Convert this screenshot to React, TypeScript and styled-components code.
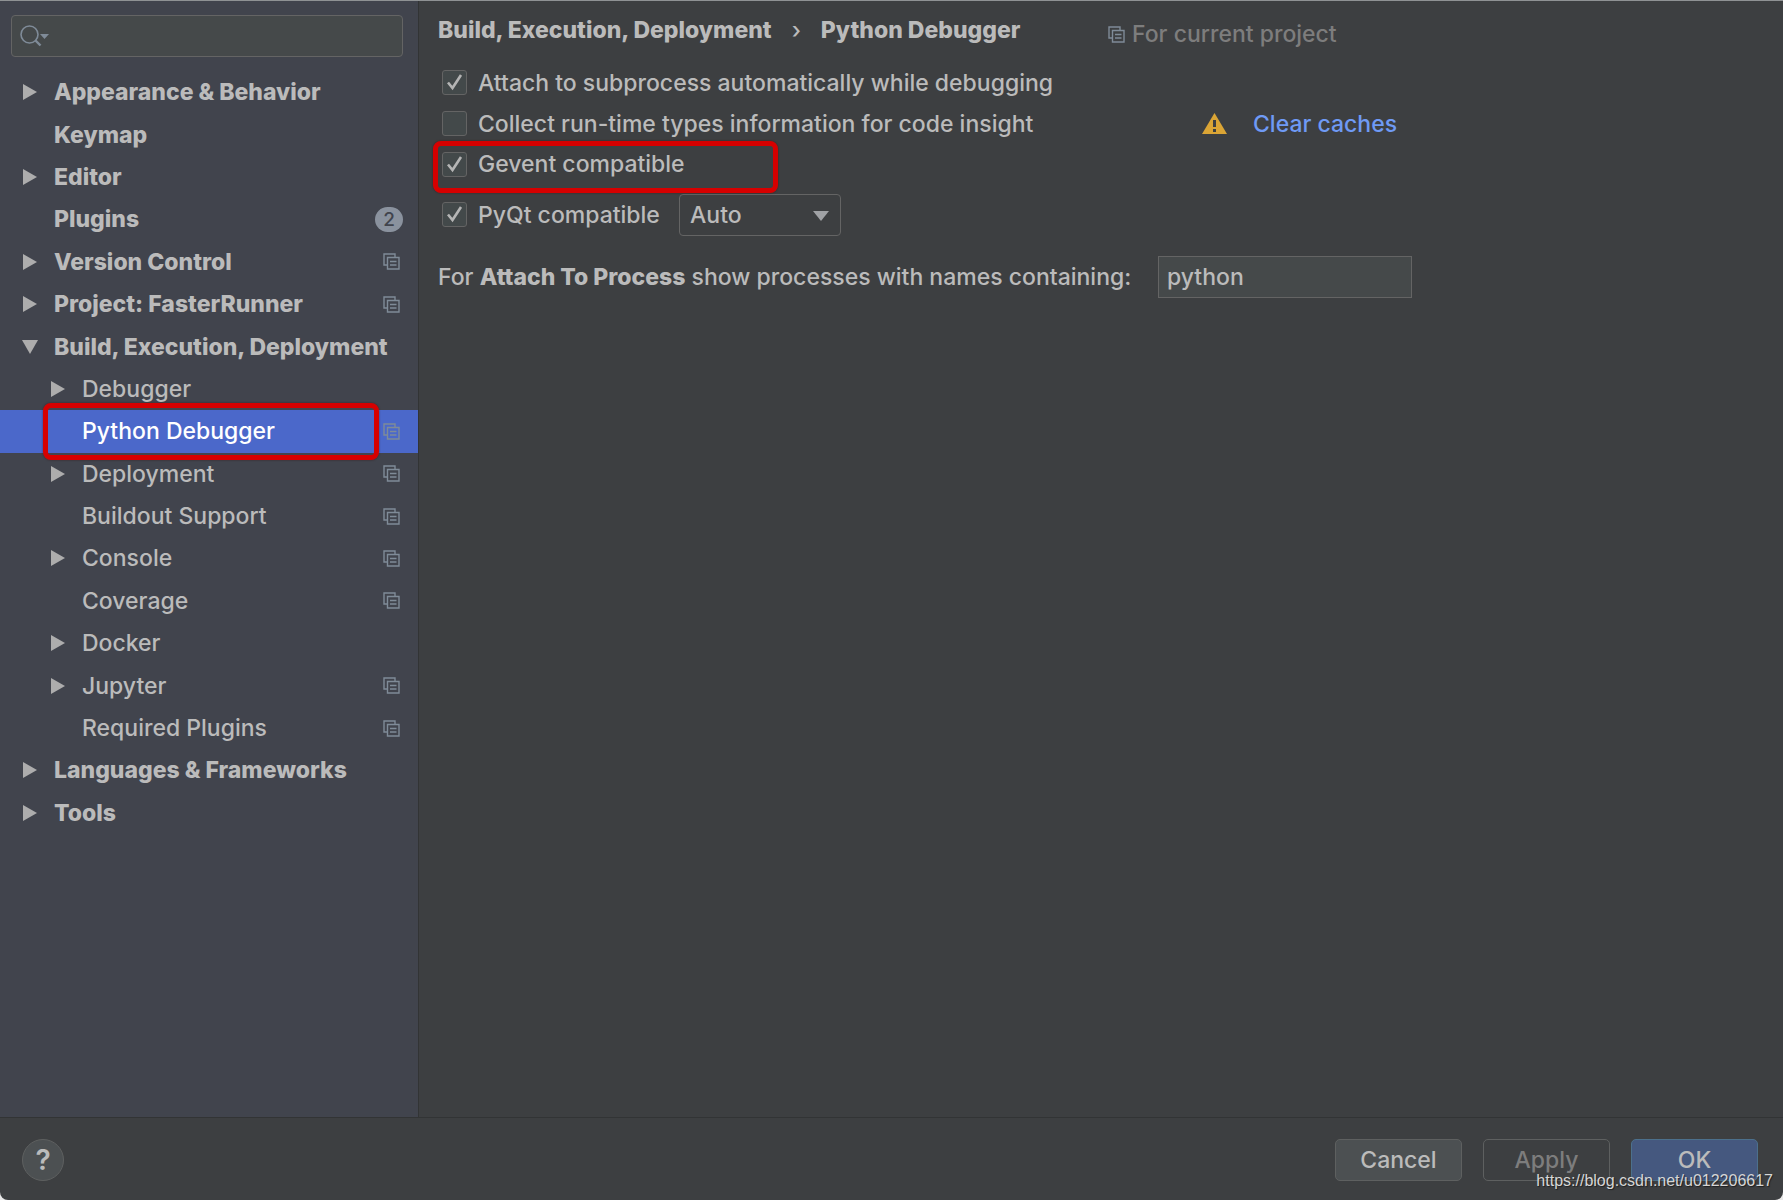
import React, { useState } from "react";
import styled, { createGlobalStyle, css } from "styled-components";

const color = {
  panel: "#3d3f41",
  sidebar: "#41444d",
  field: "#45494a",
  border: "#646464",
  line: "#323435",
  text: "#bbbbbb",
  muted: "#7d7d7d",
  icon: "#7f8b98",
  selection: "#4b68ca",
  link: "#6f9af5",
  mark: "#d60000",
};

const GlobalStyle = createGlobalStyle`
  *, *::before, *::after { box-sizing: border-box; }
  body {
    margin: 0;
    background: #e8e8e8;
    color: ${color.text};
    font-family: Inter, "Liberation Sans", sans-serif;
    font-size: 23px;
    font-weight: 500;
    line-height: 28px;
  }
  b { font-weight: 800; }
  button, input, select { font: inherit; color: inherit; margin: 0; }
`;

const Dialog = styled.div`
  display: flex;
  flex-direction: column;
  min-height: 100vh;
  background: ${color.panel};
  border-top: 1px solid #8f9294;
  border-radius: 0 0 8px 8px;
  overflow: hidden;
  position: relative;
`;

const Body = styled.div`
  flex: 1;
  display: flex;
`;

const Sidebar = styled.aside`
  flex: none;
  width: 419px;
  background: ${color.sidebar};
  border-right: 1px solid ${color.line};
`;

const SearchBox = styled.label`
  display: flex;
  align-items: center;
  height: 42px;
  margin: 14px 15px 14px 11px;
  padding-left: 8px;
  background: ${color.field};
  border: 1px solid ${color.border};
  border-radius: 4px;
`;

const SearchInput = styled.input`
  flex: 1;
  min-width: 0;
  height: 100%;
  padding: 0 8px;
  border: 0;
  outline: 0;
  background: transparent;
`;

const Tree = styled.ul`
  display: grid;
  grid-auto-rows: 1fr;
  height: 763px;
  margin: 0;
  padding: 0;
  list-style: none;
`;

const TreeRow = styled.li<{ $level: number; $selected?: boolean }>`
  position: relative;
  display: flex;
  align-items: center;
  padding: 0 15px 0 ${(p) => (p.$level ? 50 : 22)}px;
  font-weight: ${(p) => (p.$level ? 500 : 800)};
  ${(p) =>
    p.$selected &&
    css`
      background: ${color.selection};
      color: #ffffff;
    `}
`;

const Arrow = styled.span`
  flex: none;
  display: flex;
  width: 32px;
`;

const ItemLink = styled.a`
  flex: 1;
  color: inherit;
  text-decoration: none;
  white-space: nowrap;
`;

const Scope = styled.span`
  display: flex;
  flex: none;
  margin-right: 3px;
`;

const Badge = styled.span`
  flex: none;
  width: 28px;
  height: 25px;
  border-radius: 13px;
  background: #8a929e;
  color: ${color.sidebar};
  font-size: 19px;
  font-weight: 500;
  line-height: 25px;
  text-align: center;
`;

const Highlight = styled.span<{ $left: number; $top: number; $width: number; $height: number }>`
  position: absolute;
  left: ${(p) => p.$left}px;
  top: ${(p) => p.$top}px;
  width: ${(p) => p.$width}px;
  height: ${(p) => p.$height}px;
  border: 5px solid ${color.mark};
  border-radius: 8px;
  box-shadow: 0 0 2px rgba(60, 0, 0, 0.6);
  pointer-events: none;
  z-index: 1;
`;

const Main = styled.main`
  flex: 1;
  min-width: 0;
  padding: 0 19px;
`;

const Header = styled.header`
  display: flex;
  align-items: flex-start;
  padding: 15px 0 14px;
`;

const Crumbs = styled.h1`
  display: flex;
  gap: 20px;
  min-width: 670px;
  margin: 0;
  font-size: 23px;
  font-weight: 800;
  white-space: nowrap;
`;

const Separator = styled.span`
  font-weight: 500;
`;

const ProjectNote = styled.span`
  display: flex;
  align-items: center;
  gap: 7px;
  padding-top: 4px;
  color: ${color.muted};
  white-space: nowrap;
`;

const Row = styled.div<{ $height: number }>`
  position: relative;
  display: flex;
  align-items: center;
  height: ${(p) => p.$height}px;
`;

const CheckLabel = styled.label<{ $width?: number }>`
  display: flex;
  align-items: center;
  gap: 11px;
  min-width: ${(p) => p.$width ?? 0}px;
  padding-left: 4px;
  white-space: nowrap;
`;

const tick = `url("data:image/svg+xml,%3Csvg xmlns='http://www.w3.org/2000/svg' viewBox='0 0 23 23'%3E%3Cpath d='M5 11.5l4.500 5.500 8.500-13' fill='none' stroke='%23b4b4b4' stroke-width='2.6'/%3E%3C/svg%3E")`;

const CheckBox = styled.input`
  appearance: none;
  flex: none;
  width: 25px;
  height: 25px;
  border: 1px solid ${color.border};
  border-radius: 3px;
  background: #43494a center / 23px no-repeat;
  &:checked {
    background-image: ${tick};
  }
`;

const SelectBox = styled.div`
  position: relative;
  width: 162px;
  height: 42px;
`;

const Select = styled.select`
  appearance: none;
  width: 100%;
  height: 100%;
  padding: 0 10px;
  border: 1px solid ${color.border};
  border-radius: 4px;
  background: ${color.panel};
`;

const SelectArrow = styled.svg`
  position: absolute;
  right: 12px;
  top: 17px;
  pointer-events: none;
`;

const WarningIcon = styled.svg`
  flex: none;
  margin-right: 26px;
`;

const Link = styled.a`
  color: ${color.link};
  text-decoration: none;
  white-space: nowrap;
`;

const ProcessLabel = styled.label`
  min-width: 720px;
  white-space: nowrap;
`;

const TextInput = styled.input`
  width: 254px;
  height: 42px;
  padding: 0 8px;
  border: 1px solid ${color.border};
  outline: 0;
  background: ${color.field};
`;

const Footer = styled.footer`
  display: flex;
  align-items: center;
  gap: 21px;
  padding: 21px 25px 19px 22px;
  border-top: 1px solid ${color.line};
`;

const HelpButton = styled.button`
  width: 42px;
  height: 42px;
  margin-right: auto;
  padding: 0;
  border: 1px solid #5e6060;
  border-radius: 50%;
  background: #4c5052;
  font-size: 28px;
  font-weight: 600;
`;

const Button = styled.button<{ $primary?: boolean }>`
  width: 127px;
  height: 42px;
  padding: 0;
  border: 1px solid ${(p) => (p.$primary ? "#4c708c" : "#5e6060")};
  border-radius: 5px;
  background: ${(p) => (p.$primary ? "#45587f" : "#4c5052")};
  &:disabled {
    background: transparent;
    color: ${color.muted};
  }
`;

const Watermark = styled.span`
  position: absolute;
  right: 10px;
  bottom: 9px;
  color: #d6d6d6;
  font-family: "Liberation Sans", Arial, sans-serif;
  font-size: 16px;
  font-weight: 400;
  line-height: 20px;
  text-shadow: 1px 1px 1px rgba(0, 0, 0, 0.5);
  pointer-events: none;
`;

function CopyIcon() {
  return (
    <svg width="17" height="17" viewBox="0 0 17 17" fill="none" stroke={color.icon} strokeWidth="1.4" aria-hidden="true">
      <path d="M4 12H1V1H12V4" />
      <path d="M4.500 4.500H16V16H4.500Z" />
      <path d="M7 8.500H13.500M7 12H13.500" />
    </svg>
  );
}

function TreeArrow({ open }: { open: boolean }) {
  return (
    <svg width="16" height="16" viewBox="0 0 16 16" fill="#adadad" aria-hidden="true">
      <path d={open ? "M0 1H16L8 15Z" : "M1 0L15 8L1 16Z"} />
    </svg>
  );
}

function SearchIcon() {
  return (
    <svg width="30" height="24" viewBox="0 0 30 24" fill="none" stroke={color.icon} aria-hidden="true">
      <circle cx="9.500" cy="10.500" r="8.500" strokeWidth="1.600" />
      <path d="M15.500 16.500L20.500 21.500" strokeWidth="2.400" />
      <path d="M20 10H29L24.500 15Z" fill={color.icon} stroke="none" />
    </svg>
  );
}

type Item = {
  label: string;
  level: number;
  arrow?: "open" | "closed";
  copy?: boolean;
  badge?: number;
  selected?: boolean;
};

const items: Item[] = [
  { label: "Appearance & Behavior", level: 0, arrow: "closed" },
  { label: "Keymap", level: 0 },
  { label: "Editor", level: 0, arrow: "closed" },
  { label: "Plugins", level: 0, badge: 2 },
  { label: "Version Control", level: 0, arrow: "closed", copy: true },
  { label: "Project: FasterRunner", level: 0, arrow: "closed", copy: true },
  { label: "Build, Execution, Deployment", level: 0, arrow: "open" },
  { label: "Debugger", level: 1, arrow: "closed" },
  { label: "Python Debugger", level: 1, copy: true, selected: true },
  { label: "Deployment", level: 1, arrow: "closed", copy: true },
  { label: "Buildout Support", level: 1, copy: true },
  { label: "Console", level: 1, arrow: "closed", copy: true },
  { label: "Coverage", level: 1, copy: true },
  { label: "Docker", level: 1, arrow: "closed" },
  { label: "Jupyter", level: 1, arrow: "closed", copy: true },
  { label: "Required Plugins", level: 1, copy: true },
  { label: "Languages & Frameworks", level: 0, arrow: "closed" },
  { label: "Tools", level: 0, arrow: "closed" },
];

function Check({ label, initial, width }: { label: string; initial: boolean; width?: number }) {
  const [checked, setChecked] = useState(initial);
  return (
    <CheckLabel $width={width}>
      <CheckBox type="checkbox" checked={checked} onChange={(e) => setChecked(e.target.checked)} />
      {label}
    </CheckLabel>
  );
}

export default function App() {
  return (
    <>
      <GlobalStyle />
      <Dialog>
        <Body>
          <Sidebar>
            <SearchBox>
              <SearchIcon />
              <SearchInput type="text" aria-label="Search settings" />
            </SearchBox>
            <Tree>
              {items.map((item) => (
                <TreeRow key={item.label} $level={item.level} $selected={item.selected}>
                  <Arrow>{item.arrow && <TreeArrow open={item.arrow === "open"} />}</Arrow>
                  <ItemLink href="#">{item.label}</ItemLink>
                  {item.copy && (
                    <Scope>
                      <CopyIcon />
                    </Scope>
                  )}
                  {item.badge && <Badge>{item.badge}</Badge>}
                  {item.selected && <Highlight $left={43} $top={-7} $width={336} $height={57} />}
                </TreeRow>
              ))}
            </Tree>
          </Sidebar>
          <Main>
            <Header>
              <Crumbs>
                <span>Build, Execution, Deployment</span>
                <Separator>›</Separator>
                <span>Python Debugger</span>
              </Crumbs>
              <ProjectNote>
                <CopyIcon />
                For current project
              </ProjectNote>
            </Header>
            <Row $height={41}>
              <Check label="Attach to subprocess automatically while debugging" initial />
            </Row>
            <Row $height={41}>
              <Check label="Collect run-time types information for code insight" initial={false} width={764} />
              <WarningIcon width="25" height="21" viewBox="0 0 25 21" role="img" aria-label="Warning">
                <path d="M12.500 0L25 21H0Z" fill="#dba535" />
                <path d="M11 7H14V14H11ZM11 16H14V19H11Z" fill="#3d3f41" />
              </WarningIcon>
              <Link href="#">Clear caches</Link>
            </Row>
            <Row $height={40}>
              <Check label="Gevent compatible" initial />
              <Highlight $left={-5} $top={-3} $width={345} $height={52} />
            </Row>
            <Row $height={61}>
              <Check label="PyQt compatible" initial width={241} />
              <SelectBox>
                <Select aria-label="PyQt compatible backend" defaultValue="Auto">
                  <option>Auto</option>
                </Select>
                <SelectArrow width="16" height="10" viewBox="0 0 16 10" aria-hidden="true">
                  <path d="M0 0H16L8 10Z" fill="#a0a2a5" />
                </SelectArrow>
              </SelectBox>
            </Row>
            <Row $height={64}>
              <ProcessLabel htmlFor="process-filter">
                For <b>Attach To Process</b> show processes with names containing:
              </ProcessLabel>
              <TextInput id="process-filter" type="text" defaultValue="python" />
            </Row>
          </Main>
        </Body>
        <Footer>
          <HelpButton type="button" aria-label="Help">
            ?
          </HelpButton>
          <Button type="button">Cancel</Button>
          <Button type="button" disabled>
            Apply
          </Button>
          <Button type="button" $primary>
            OK
          </Button>
        </Footer>
        <Watermark>https://blog.csdn.net/u012206617</Watermark>
      </Dialog>
    </>
  );
}
